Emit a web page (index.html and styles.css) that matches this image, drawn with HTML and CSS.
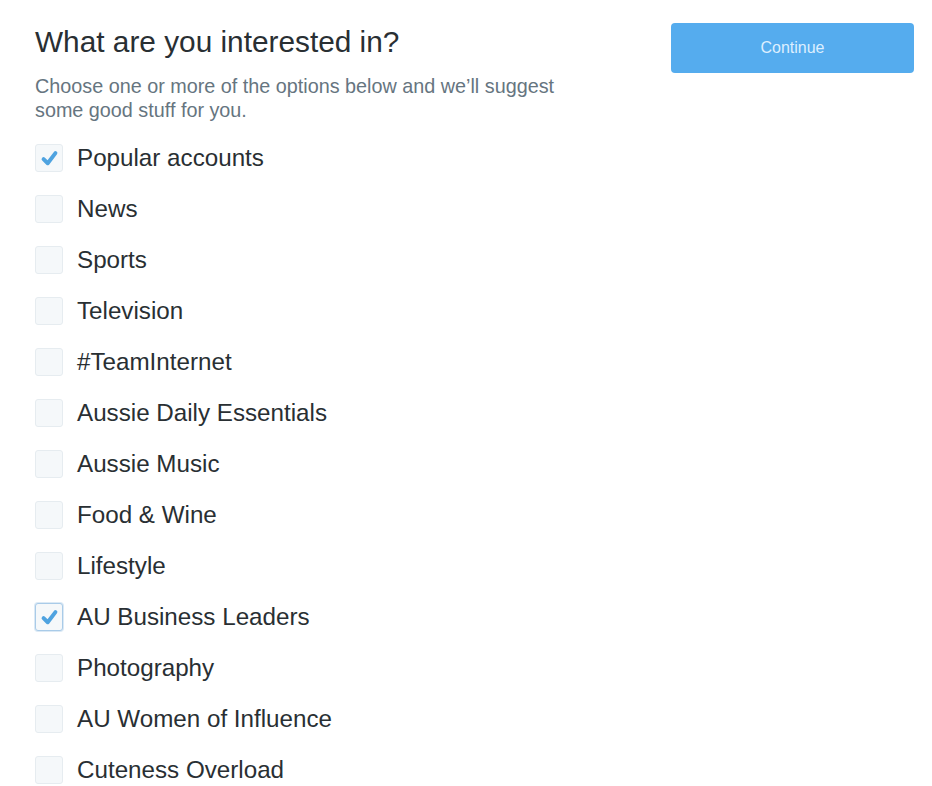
FILE: index.html
```html
<!DOCTYPE html>
<html>
<head>
<meta charset="utf-8">
<link rel="stylesheet" href="styles.css">
</head>
<body>
<div class="page">
  <div class="main">
    <h1 class="title">What are you interested in?</h1>
    <p class="subtitle">Choose one or more of the options below and we’ll suggest some good stuff for you.</p>
    <ul class="options">
      <li class="option"><span class="box checked"><svg viewBox="0 0 16 16"><path d="M3 8.5 L6.5 12 L13 3.5" /></svg></span><span class="label">Popular accounts</span></li>
      <li class="option"><span class="box"></span><span class="label">News</span></li>
      <li class="option"><span class="box"></span><span class="label">Sports</span></li>
      <li class="option"><span class="box"></span><span class="label">Television</span></li>
      <li class="option"><span class="box"></span><span class="label">#TeamInternet</span></li>
      <li class="option"><span class="box"></span><span class="label">Aussie Daily Essentials</span></li>
      <li class="option"><span class="box"></span><span class="label">Aussie Music</span></li>
      <li class="option"><span class="box"></span><span class="label">Food &amp; Wine</span></li>
      <li class="option"><span class="box"></span><span class="label">Lifestyle</span></li>
      <li class="option"><span class="box checked focused"><svg viewBox="0 0 16 16"><path d="M3 8.5 L6.5 12 L13 3.5" /></svg></span><span class="label">AU Business Leaders</span></li>
      <li class="option"><span class="box"></span><span class="label">Photography</span></li>
      <li class="option"><span class="box"></span><span class="label">AU Women of Influence</span></li>
      <li class="option"><span class="box"></span><span class="label">Cuteness Overload</span></li>
    </ul>
  </div>
  <div class="side">
    <button class="continue">Continue</button>
  </div>
</div>
</body>
</html>
```
FILE: styles.css
```css
html, body {
  margin: 0;
  padding: 0;
  background: #fff;
  font-family: "Liberation Sans", Arial, sans-serif;
  overflow: hidden;
}
.page {
  display: flex;
  justify-content: space-between;
  padding: 23px 18px 0 35px;
}
.main {
  width: 545px;
}
.title {
  margin: 0;
  padding-top: 3px;
  font-size: 29.8px;
  font-weight: normal;
  color: #292f33;
  line-height: 32px;
}
.subtitle {
  margin: 16px 0 0 0;
  font-size: 19.8px;
  line-height: 24px;
  color: #66757f;
}
.options {
  list-style: none;
  margin: 22px 0 0 0;
  padding: 0;
}
.option {
  display: flex;
  align-items: center;
  height: 28px;
  margin-bottom: 23px;
}
.box {
  box-sizing: border-box;
  width: 28px;
  height: 28px;
  border: 1px solid #e6ecf0;
  border-radius: 3px;
  background: #f5f8fa;
  display: flex;
  align-items: center;
  justify-content: center;
  flex: none;
}
.box svg {
  width: 19px;
  height: 19px;
}
.box svg path {
  fill: none;
  stroke: #4fa3e0;
  stroke-width: 3.3;
  stroke-linecap: round;
  stroke-linejoin: round;
}
.box.focused {
  border-color: #a9cbe8;
  box-shadow: 0 0 0 1px #dbe9f5;
}
.label {
  margin-left: 14px;
  font-size: 24.2px;
  color: #292f33;
  line-height: 28px;
}
.side {
  flex: none;
}
.continue {
  width: 243px;
  height: 50px;
  border: none;
  border-radius: 4px;
  background: #55acee;
  color: #ddefff;
  font-family: "Liberation Sans", Arial, sans-serif;
  font-size: 16px;
  padding: 0;
}
```
